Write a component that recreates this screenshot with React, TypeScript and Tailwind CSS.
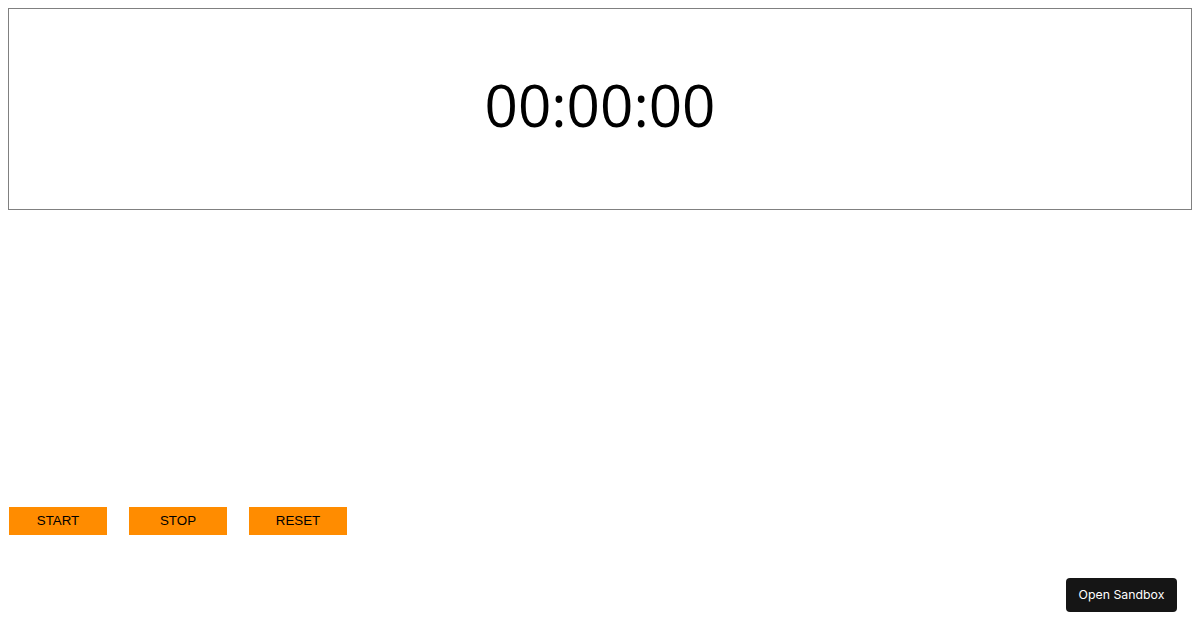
import React from "react";

export default function App() {
  return (
    <div className="relative w-[1200px] h-[630px] bg-white overflow-hidden" style={{ fontFamily: '"Liberation Sans", Arial, sans-serif' }}>
      <div className="p-2">
        <div className="h-[202px] border border-[#808080] flex items-center justify-center pb-[8px]">
          <span className="text-[58.4px] leading-none text-black" style={{ fontFamily: '"Open Sans", sans-serif' }}>00:00:00</span>
        </div>
        <div className="mt-[297px] ml-[1px] flex gap-[22px]">
          <button className="w-[98px] h-[28px] bg-[#ff8c00] text-[13.33px] text-black">START</button>
          <button className="w-[98px] h-[28px] bg-[#ff8c00] text-[13.33px] text-black">STOP</button>
          <button className="w-[98px] h-[28px] bg-[#ff8c00] text-[13.33px] text-black">RESET</button>
        </div>
      </div>
      <div className="absolute right-[23px] bottom-[18px] w-[111px] h-[34px] rounded-[4px] bg-[#151515] text-white text-[12.3px] flex items-center justify-center" style={{ fontFamily: 'Inter, sans-serif' }}>
        Open Sandbox
      </div>
    </div>
  );
}
